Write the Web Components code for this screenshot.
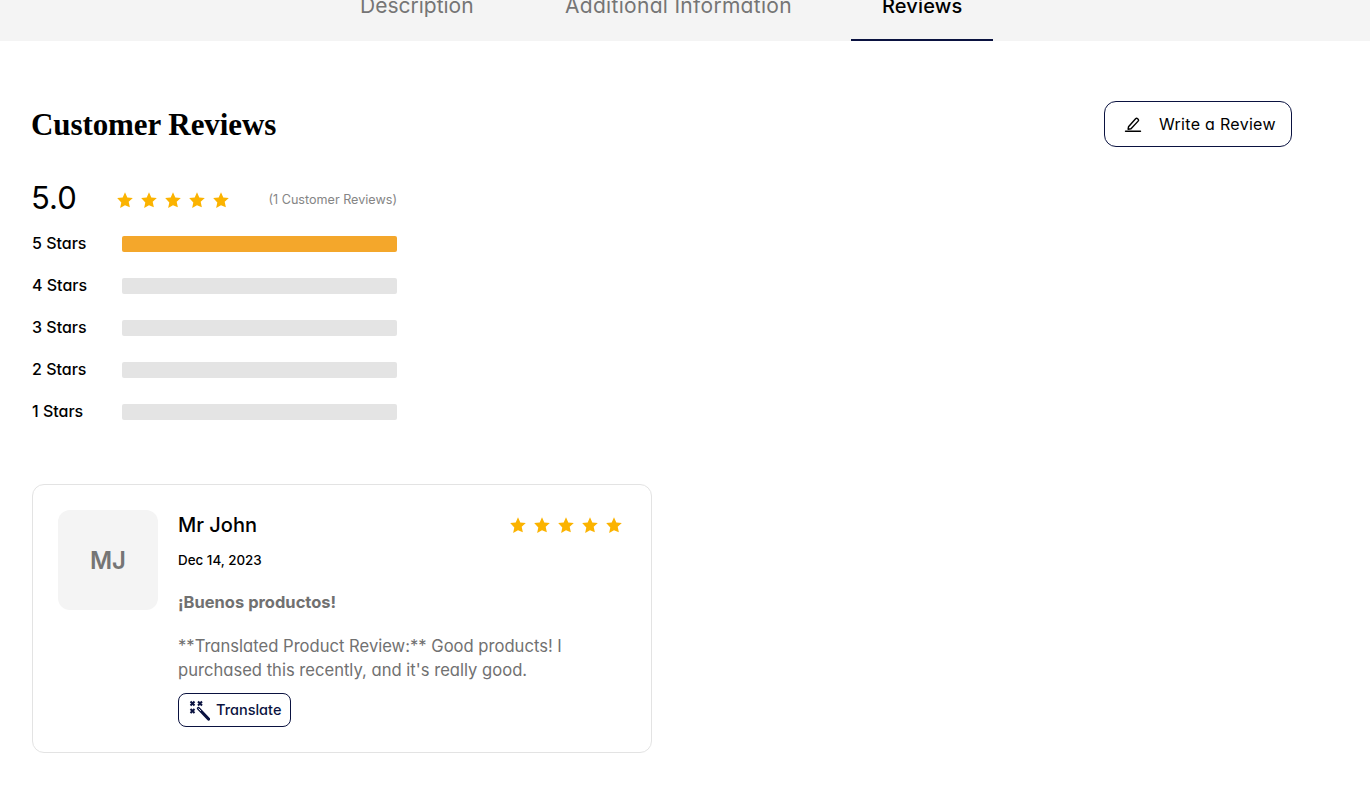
<!DOCTYPE html>
<html lang="en">
<head>
<meta charset="utf-8">
<title>Customer Reviews</title>
<style>
    html, body { margin: 0; padding: 0; background: #fff; }
    body { font-family: Inter, "Liberation Sans", sans-serif; font-feature-settings: "cv11"; color: #000; height: 792px; overflow: hidden; }
</style>
</head>
<body>
<product-tabs></product-tabs>
<reviews-section></reviews-section>

<script>
const NAVY = '#0a1240';
const STAR = '<svg viewBox="0 0 24 24" width="18" height="18"><path fill="#fbb300" d="M12 1.800l3.050 6.800 7.400.8-5.530 4.950 1.550 7.250L12 18.900l-6.470 3.700 1.550-7.250L1.550 9.400l7.400-.8z"/></svg>';

class ProductTabs extends HTMLElement {
    connectedCallback() {
        this.attachShadow({ mode: 'open' });
        this.shadowRoot.innerHTML = `
            <style>
                :host { display: flex; height: 41px; background: #f4f4f4; padding-left: 331px; gap: 30px; overflow: hidden; }
                .tab {
                    box-sizing: border-box;
                    height: 41px;
                    padding: 0 30px;
                    line-height: 12px;
                    font-size: 21px;
                    color: #757575;
                    white-space: nowrap;
                }
                .tab.first { padding-left: 29px; }
                .tab.wide { letter-spacing: .3px; }
                .tab.active { color: #000; border-bottom: 2px solid ${NAVY}; font-weight: 500; font-size: 20px; letter-spacing: .15px; padding-left: 31px; }
            </style>
            <div class="tab first" style="width:174px">Description</div>
            <div class="tab wide" style="width:286px">Additional Information</div>
            <div class="tab active" style="width:142px">Reviews</div>
        `;
    }
}

class StarRow extends HTMLElement {
    connectedCallback() {
        this.attachShadow({ mode: 'open' });
        this.shadowRoot.innerHTML = `
            <style>
                :host { display: inline-flex; gap: 6px; }
                svg { display: block; }
            </style>
            ${STAR.repeat(5)}
        `;
    }
}

class RatingBar extends HTMLElement {
    connectedCallback() {
        this.attachShadow({ mode: 'open' });
        const fill = this.getAttribute('fill') || '0';
        this.shadowRoot.innerHTML = `
            <style>
                :host { display: flex; align-items: center; height: 16px; font-size: 16px; font-weight: 500; }
                .label { width: 90px; white-space: nowrap; padding-bottom: 2px; }
                .track { width: 275px; height: 16px; background: #e4e4e4; border-radius: 2px; overflow: hidden; }
                .fill { height: 100%; background: #f4a72b; }
            </style>
            <div class="label"><slot></slot></div>
            <div class="track"><div class="fill" style="width:${fill}%"></div></div>
        `;
    }
}

class ReviewCard extends HTMLElement {
    connectedCallback() {
        this.attachShadow({ mode: 'open' });
        this.shadowRoot.innerHTML = `
            <style>
                :host {
                    display: flex;
                    box-sizing: border-box;
                    width: 620px;
                    height: 269px;
                    padding: 25px 28px 0 25px;
                    gap: 20px;
                    border: 1px solid #e3e3e3;
                    border-radius: 12px;
                }
                .avatar {
                    flex: none;
                    width: 100px;
                    height: 100px;
                    border-radius: 12px;
                    background: #f4f4f4;
                    color: #757575;
                    font-size: 24px;
                    font-weight: 600;
                    display: flex;
                    align-items: center;
                    justify-content: center;
                }
                .body { flex: 1; min-width: 0; }
                .top { display: flex; justify-content: space-between; align-items: center; height: 30px; }
                .name { font-size: 20px; font-weight: 500; }
                .date { margin-top: 10px; font-size: 13.4px; line-height: 20px; font-weight: 500; }
                .title { margin-top: 20px; font-size: 16.5px; line-height: 24px; font-weight: 700; color: #717171; }
                .text { margin: 20px 0 0; font-size: 16.6px; line-height: 24px; color: #717171; }
                button {
                    display: inline-flex;
                    align-items: center;
                    gap: 6px;
                    box-sizing: border-box;
                    width: 113px;
                    height: 34px;
                    margin-top: 11px;
                    padding: 0 0 0 10px;
                    background: #fff;
                    border: 1px solid ${NAVY};
                    border-radius: 8px;
                    color: ${NAVY};
                    font: 500 14.5px Inter, "Liberation Sans", sans-serif;
                    font-feature-settings: "cv11";
                }
                button svg { display: block; flex: none; }
                button span { padding-bottom: 2px; }
            </style>
            <div class="avatar">MJ</div>
            <div class="body">
                <div class="top">
                    <div class="name">Mr John</div>
                    <star-row></star-row>
                </div>
                <div class="date">Dec 14, 2023</div>
                <div class="title">¡Buenos productos!</div>
                <p class="text">**Translated Product Review:** Good products! I purchased this recently, and it's really good.</p>
                <button>
                    <svg viewBox="0 0 21 21" width="21" height="21">
                        <path d="M9.500 8.500L19.500 19" stroke="${NAVY}" stroke-width="3.200" stroke-linecap="round" fill="none"/>
                        <path d="M9.500 8.500l2.300 2.400" stroke="#fff" stroke-width="1" fill="none"/>
                        <g stroke="${NAVY}" stroke-width="2" fill="none">
                            <path d="M1.500 1.500l4 4M5.500 1.500l-4 4"/>
                            <path d="M9 1.500l4 4M13 1.500l-4 4"/>
                            <path d="M1.500 9l4 4M5.500 9l-4 4"/>
                        </g>
                    </svg>
                    <span>Translate</span>
                </button>
            </div>
        `;
    }
}

class ReviewsSection extends HTMLElement {
    connectedCallback() {
        this.attachShadow({ mode: 'open' });
        this.shadowRoot.innerHTML = `
            <style>
                :host { display: block; padding: 60px 78px 0 32px; }
                .head { display: flex; justify-content: space-between; align-items: center; height: 46px; }
                h2 { margin: 2px 0 0 -1px; font: 700 31px "Liberation Serif", serif; letter-spacing: -.08px; }
                .write {
                    display: flex;
                    align-items: center;
                    gap: 17px;
                    box-sizing: border-box;
                    width: 188px;
                    height: 46px;
                    padding-left: 19px;
                    background: #fff;
                    border: 1px solid ${NAVY};
                    border-radius: 12px;
                    font: 400 16px Inter, "Liberation Sans", sans-serif;
                    font-feature-settings: "cv11";
                    letter-spacing: .3px;
                    color: #000;
                }
                .write svg { display: block; flex: none; }
                .summary { display: flex; align-items: center; width: 365px; height: 40px; margin-top: 32px; }
                .score { width: 85px; margin-left: -1px; padding-bottom: 3px; font-size: 31px; }
                .summary star-row { margin-top: 2px; }
                .count { margin-left: auto; font-size: 12.6px; color: #858585; white-space: nowrap; }
                .bars { display: flex; flex-direction: column; gap: 26px; margin-top: 17px; }
                review-card { margin-top: 64px; }
            </style>
            <div class="head">
                <h2>Customer Reviews</h2>
                <button class="write">
                    <svg viewBox="0 0 18 18" width="18" height="18" fill="none" stroke="#000" stroke-width="1.400" stroke-linejoin="round">
                        <path d="M4.500 11.800L11.600 3.700c.6-.6 1.400-.6 2 0l.5.5c.6.6.6 1.300 0 1.900L7 13.800l-2.900.4z"/>
                        <path d="M1.500 16.300h15" stroke-linecap="round"/>
                    </svg>
                    Write a Review
                </button>
            </div>
            <div class="summary">
                <div class="score">5.0</div>
                <star-row></star-row>
                <div class="count">(1 Customer Reviews)</div>
            </div>
            <div class="bars">
                <rating-bar fill="100">5 Stars</rating-bar>
                <rating-bar>4 Stars</rating-bar>
                <rating-bar>3 Stars</rating-bar>
                <rating-bar>2 Stars</rating-bar>
                <rating-bar>1 Stars</rating-bar>
            </div>
            <review-card></review-card>
        `;
    }
}

customElements.define('star-row', StarRow);
customElements.define('rating-bar', RatingBar);
customElements.define('review-card', ReviewCard);
customElements.define('reviews-section', ReviewsSection);
customElements.define('product-tabs', ProductTabs);
</script>
</body>
</html>
